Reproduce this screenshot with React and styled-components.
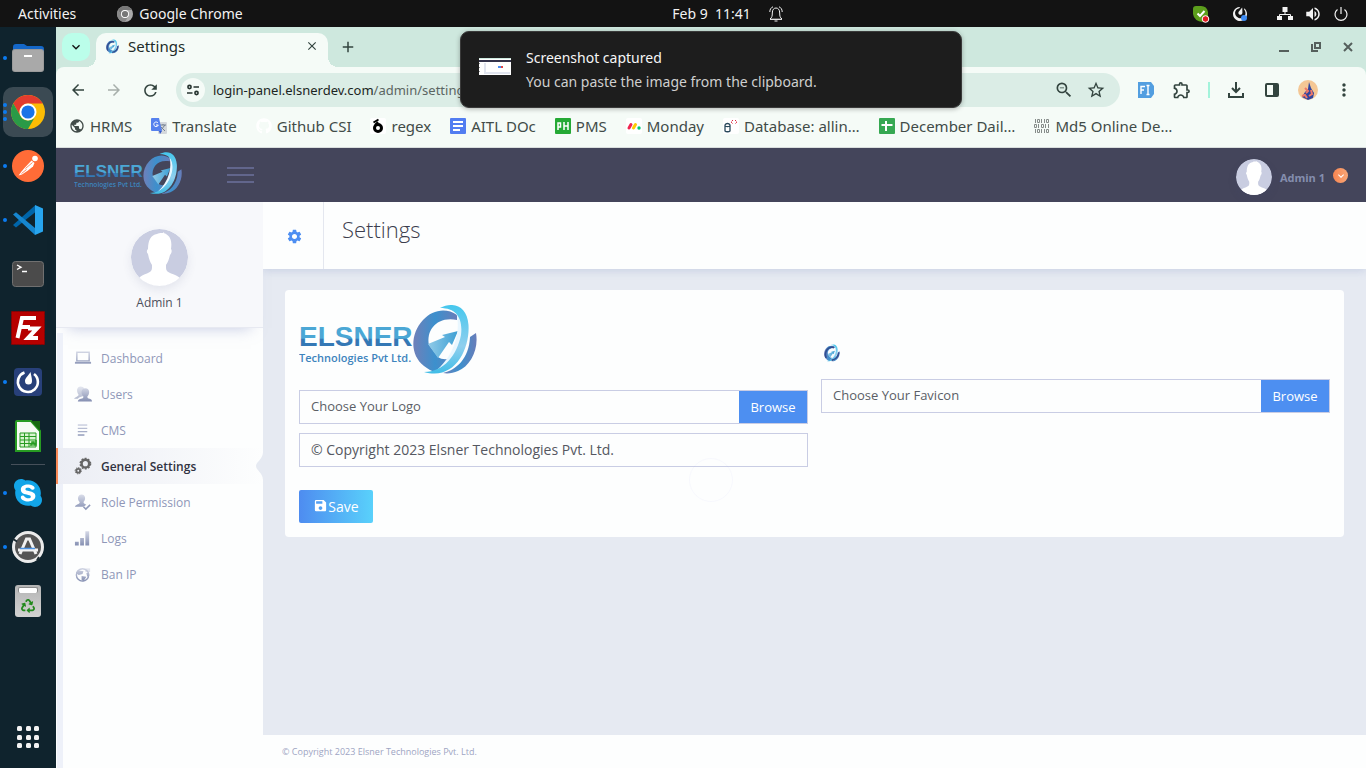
import styled, { createGlobalStyle, css } from "styled-components";
import {
	MdArrowBack,
	MdArrowForward,
	MdRefresh,
	MdStarBorder,
	MdOutlineZoomOut,
	MdOutlineExtension,
	MdMoreVert,
	MdClose,
	MdAdd,
	MdKeyboardArrowDown,
	MdVolumeUp,
	MdSettings,
	MdSave,
	MdPublic,
} from "react-icons/md";
import { FaGithub, FaRecycle, FaSkype } from "react-icons/fa";
import { SiMattermost } from "react-icons/si";

const App = () => {
	return (
		<Desktop>
			<GlobalStyle />
			<TopBar />
			<Workspace>
				<Dock />
				<Browser>
					<TabStrip />
					<Toolbar />
					<Bookmarks />
					<AdminPanel />
					<Notification role="status">
						<Thumbnail />
						<div>
							<NoticeTitle>Screenshot captured</NoticeTitle>
							<NoticeText>
								You can paste the image from the clipboard.
							</NoticeText>
						</div>
					</Notification>
				</Browser>
			</Workspace>
		</Desktop>
	);
};

export default App;

/* ---------- system bar ---------- */

const TopBar = () => (
	<SystemBar>
		<SystemGroup>
			<span>Activities</span>
			<CurrentApp>
				<ChromeIcon size={16} mono />
				Google Chrome
			</CurrentApp>
		</SystemGroup>
		<Clock>
			<span>Feb 9&nbsp; 11:41</span>
			<svg width="14" height="16" viewBox="0 0 14 16" fill="none" stroke="#f2f2f2">
				<path d="M1 13c2-1.500 2.300-3 2.300-6C3.300 3.500 5 2 7 2s3.700 1.500 3.700 5c0 3 .300 4.500 2.300 6" />
				<path d="M1 13.300h12" strokeWidth="1.200" />
				<path d="M5.500 15h3M.800 6C.800 3.500 2 1.500 4 .800M13.200 6C13.200 3.500 12 1.500 10 .800" />
			</svg>
		</Clock>
		<Tray>
			<svg width="18" height="18" viewBox="0 0 18 18">
				<path d="M1 4q0-3 3-3h5q6 0 7 6v5q0 5-5 5-9-1-10-8z" fill="#5c9e1c" />
				<path d="M5.500 8.500l2.500 2.500 4.500-5" fill="none" stroke="#fff" strokeWidth="2" />
				<circle cx="13.500" cy="14" r="3.300" fill="#e01b24" stroke="#fff" />
			</svg>
			<TrayChat>
				<SiMattermost />
				<i />
			</TrayChat>
			<svg width="16" height="16" viewBox="0 0 16 16" fill="#f2f2f2">
				<path d="M5.500 1h5v5h-5zM0 10h5v4H0zM11 10h5v4h-5z" />
				<path d="M8 6v2.500M2.500 10V8.500h11V10" fill="none" stroke="#f2f2f2" />
			</svg>
			<MdVolumeUp size={18} />
			<svg width="16" height="16" viewBox="0 0 16 16" fill="none" stroke="#f2f2f2" strokeWidth="1.200">
				<path d="M4.500 3.500a6 6 0 1 0 7 0M8 1v7" />
			</svg>
		</Tray>
	</SystemBar>
);

/* ---------- dock ---------- */

const ChromeIcon = ({ size = 34, mono }) => (
	<svg width={size} height={size} viewBox="0 0 34 34">
		<circle cx="17" cy="17" r="17" fill={mono ? "#aaa" : "#fbbc04"} />
		<path d="M2.300 8.500A17 17 0 0 1 31.700 8.500H17A8.500 8.500 0 0 0 9.600 21.200z" fill={mono ? "#777" : "#e33b2e"} />
		<path d="M2.300 8.500A17 17 0 0 0 17 34l7.400-12.800A8.500 8.500 0 0 1 9.600 21.200z" fill={mono ? "#888" : "#2a9a47"} />
		<circle cx="17" cy="17" r="8.500" fill="#fff" />
		<circle cx="17" cy="17" r="6.600" fill={mono ? "#777" : "#1a73e8"} />
	</svg>
);

const FilesIcon = () => (
	<svg width="32" height="30" viewBox="0 0 32 30">
		<path d="M1 4q0-3 3-3h8l3 2h14q3 0 3 3v8H1z" fill="#1467c8" />
		<rect width="32" height="23" y="6" rx="3" fill="#9b9b9b" />
		<rect x="1" y="7" width="30" height="21" rx="2" fill="#a9a9a9" />
		<path d="M12 13h8" stroke="#fff" strokeWidth="2" />
	</svg>
);

const PostmanIcon = () => (
	<svg width="34" height="34" viewBox="0 0 34 34">
		<circle cx="17" cy="17" r="16" fill="#ff6c37" />
		<circle cx="24" cy="9.500" r="2.800" fill="#fff" />
		<path d="M20.500 11.500l3 2.500-1.500 3.500-5 4-6 4-3.500 1 3-4 3-3.500z" fill="#fff" />
		<path d="M21.500 13.500l-7 6M10.500 24.500l5-4" stroke="#ff6c37" strokeWidth=".800" />
	</svg>
);

const CodeIcon = () => (
	<svg width="32" height="32" viewBox="0 0 32 32">
		<path d="M1 21L23.500 1v7L4 23.500 1 21z" fill="#0065a9" />
		<path d="M1 10.500l3-2.300L23 24v7z" fill="#1686cf" />
		<path d="M23 1l8 3.500v23L23 31z" fill="#27a5ef" />
	</svg>
);

const TerminalIcon = () => (
	<svg width="32" height="28" viewBox="0 0 32 28">
		<rect x=".500" y="1.500" width="31" height="25" rx="3" fill="#4b4b4b" stroke="#707070" />
		<path d="M5 5l4 2.200L5 9.500M10 11.500h5" fill="none" stroke="#fff" strokeWidth="1.400" />
	</svg>
);

const FilezillaIcon = () => (
	<svg width="34" height="34" viewBox="0 0 34 34">
		<rect x=".500" y=".500" width="33" height="33" fill="#b60000" stroke="#8d0000" strokeDasharray="2 1" />
		<path d="M6.500 27L11 7h14M9 16h10M17 17.500h9L17 27h10" fill="none" stroke="#fff" strokeWidth="4" />
	</svg>
);

const MattermostIcon = () => (
	<svg width="28" height="28" viewBox="0 0 28 28">
		<rect width="28" height="28" rx="4" fill="#28407a" />
		<path d="M10.500 4.500a10 10 0 1 0 9.500 1.500" fill="none" stroke="#fff" strokeWidth="2.600" />
		<path d="M16.500 4c.800 4 1.500 6 1.500 9a3.500 3.500 0 1 1-7 0C11 10.500 14 8 16.500 4z" fill="#fff" />
	</svg>
);

const CalcIcon = () => (
	<svg width="28" height="32" viewBox="0 0 28 32">
		<path d="M3 1h14l9 10v20H2V2q0-1 1-1z" fill="#f6fbf4" stroke="#279b22" strokeWidth="2" />
		<path d="M17 1h9v10z" fill="#16680f" />
		<path d="M6 13h16v14H6zM6 16.500h16M6 20h16M6 23.500h16M10.500 13v14M15 13v14" fill="#d8f4cf" stroke="#279b22" />
		<path d="M16 25h2v-3h2v3h2v-5" stroke="#279b22" fill="none" strokeWidth="1.500" />
	</svg>
);

const SkypeIcon = () => (
	<SkypeMark>
		<FaSkype size={32} />
	</SkypeMark>
);

const UpdaterIcon = () => (
	<svg width="34" height="34" viewBox="0 0 34 34">
		<circle cx="17" cy="17" r="14.500" fill="#555" stroke="#ececec" strokeWidth="3" />
		<path d="M9 24l6.500-15h3L25 24M7 20h20" fill="none" stroke="#f2f2f2" strokeWidth="3" />
		<path d="M9 18.500h15" stroke="#4d94e6" strokeWidth="1.500" />
		<path d="M2 9l4 2.500M26 30.500l2-3.500" stroke="#1c2a31" strokeWidth="2" />
	</svg>
);

const TrashIcon = () => (
	<TrashCan>
		<i />
		<FaRecycle size={14} />
	</TrashCan>
);

const AppsIcon = () => (
	<svg width="24" height="24" viewBox="0 0 24 24" fill="#f3f3f3">
		{[1, 10, 18].map((y) =>
			[1, 10, 18].map((x) => (
				<rect key={`${x}-${y}`} x={x} y={y} width="5" height="5" rx="1.500" />
			))
		)}
	</svg>
);

const dockApps = [
	{ name: "Files", Icon: FilesIcon, dots: 1 },
	{ name: "Chrome", Icon: ChromeIcon, dots: 3, active: true },
	{ name: "Postman", Icon: PostmanIcon, dots: 1 },
	{ name: "Code", Icon: CodeIcon, dots: 1 },
	{ name: "Terminal", Icon: TerminalIcon, dots: 0 },
	{ name: "FileZilla", Icon: FilezillaIcon, dots: 0 },
	{ name: "Mattermost", Icon: MattermostIcon, dots: 1 },
	{ name: "Calc", Icon: CalcIcon, dots: 0 },
];

const dockRunning = [
	{ name: "Skype", Icon: SkypeIcon, dots: 1 },
	{ name: "Updater", Icon: UpdaterIcon, dots: 1 },
	{ name: "Trash", Icon: TrashIcon, dots: 0 },
];

const DockItem = ({ name, Icon, dots, active }) => (
	<DockButton aria-label={name}>
		<DockDots>
			{Array.from({ length: dots }, (_, i) => (
				<i key={i} />
			))}
		</DockDots>
		<DockTile $active={active}>
			<Icon />
		</DockTile>
	</DockButton>
);

const Dock = () => (
	<DockBar>
		{dockApps.map((app) => (
			<DockItem key={app.name} {...app} />
		))}
		<DockLine />
		{dockRunning.map((app) => (
			<DockItem key={app.name} {...app} />
		))}
		<DockSpacer />
		<DockItem name="Show applications" Icon={AppsIcon} dots={0} />
	</DockBar>
);

/* ---------- browser ---------- */

const TabStrip = () => (
	<Tabs>
		<TabSearch aria-label="Search tabs">
			<MdKeyboardArrowDown size={16} />
		</TabSearch>
		<Tab>
			<Favicon size={13} />
			<TabTitle>Settings</TabTitle>
			<PlainButton $size={16} aria-label="Close tab">
				<MdClose size={14} />
			</PlainButton>
		</Tab>
		<PlainButton $size={24} aria-label="New tab">
			<MdAdd size={18} />
		</PlainButton>
		<WindowControls>
			<PlainButton $size={16} aria-label="Minimize">
				<svg width="12" height="12" stroke="#555f5c" strokeWidth="2">
					<path d="M1 10h10" />
				</svg>
			</PlainButton>
			<PlainButton $size={16} aria-label="Restore">
				<svg width="12" height="12" fill="none" stroke="#555f5c" strokeWidth="2">
					<path d="M5 2h5v5H5zM2 3v7h6" />
				</svg>
			</PlainButton>
			<PlainButton $size={16} aria-label="Close window">
				<svg width="12" height="12" stroke="#555f5c" strokeWidth="2">
					<path d="M2 2l8 8M10 2l-8 8" />
				</svg>
			</PlainButton>
		</WindowControls>
	</Tabs>
);

const Toolbar = () => (
	<ToolbarRow>
		<PlainButton $size={28} aria-label="Back">
			<MdArrowBack size={18} />
		</PlainButton>
		<PlainButton $size={28} $dim aria-label="Forward">
			<MdArrowForward size={18} />
		</PlainButton>
		<PlainButton $size={28} aria-label="Reload">
			<MdRefresh size={19} />
		</PlainButton>
		<AddressBar>
			<SiteInfo>
				<svg width="12" height="12" fill="none" stroke="#26332f" strokeWidth="1.600">
					<path d="M6.500 3H12M0 9h5.500" />
					<circle cx="2.500" cy="3" r="1.600" />
					<circle cx="9.500" cy="9" r="1.600" />
				</svg>
			</SiteInfo>
			<Url>
				<b>login-panel.elsnerdev.com</b>/admin/settings
			</Url>
			<PlainButton $size={24} aria-label="Zoom">
				<MdOutlineZoomOut size={20} />
			</PlainButton>
			<PlainButton $size={24} aria-label="Bookmark this tab">
				<MdStarBorder size={20} />
			</PlainButton>
		</AddressBar>
		<PlainButton $size={28} aria-label="Form filler">
			<svg width="16" height="16">
				<path d="M0 0h13l3 4v8l-3 4H0z" fill="#529ee0" />
				<path d="M3 12V4.500h4M3 8h3M8.500 3.500h3M8.500 12.500h3M10 3.500v9" fill="none" stroke="#fff" strokeWidth="1.400" />
			</svg>
		</PlainButton>
		<PlainButton $size={28} aria-label="Extensions">
			<MdOutlineExtension size={20} />
		</PlainButton>
		<ToolbarDivider />
		<PlainButton $size={28} aria-label="Downloads">
			<svg width="16" height="16" fill="none" stroke="#33443f" strokeWidth="2">
				<path d="M8 0v10M4 6l4 4 4-4M1 11v4h14v-4" />
			</svg>
		</PlainButton>
		<PlainButton $size={28} aria-label="Side panel">
			<svg width="14" height="14">
				<rect x="1" y="1" width="12" height="12" rx="1" fill="none" stroke="#33443f" strokeWidth="2" />
				<path d="M8 1h5v12H8z" fill="#33443f" />
			</svg>
		</PlainButton>
		<PlainButton $size={28} aria-label="Profile">
			<svg width="20" height="20">
				<circle cx="10" cy="10" r="10" fill="#f4c795" />
				<path d="M11 2l2 6 3 5-1 5-5 2-6-3 3-5 3-3z" fill="#30459d" />
				<path d="M7 8l3 3-2 2M13 10l1 4-3 2M4 16l3-1 2 3" fill="none" stroke="#ef7968" strokeWidth="2" />
			</svg>
		</PlainButton>
		<PlainButton $size={28} aria-label="Menu">
			<MdMoreVert size={20} />
		</PlainButton>
	</ToolbarRow>
);

const SheetIcon = ({ color, d, width = 2 }) => (
	<svg width="16" height="16">
		<rect width="16" height="16" rx="1" fill={color} />
		<path d={d} fill="none" stroke="#fff" strokeWidth={width} />
	</svg>
);

const TranslateIcon = () => (
	<svg width="16" height="16">
		<rect x="7" y="4" width="9" height="12" rx="1" fill="#d4d8dc" />
		<path d="M9 7h6M12 6v1M10 12l4-5M10 9l4 4" stroke="#738090" />
		<path d="M1 0h7l3 13H1q-1 0-1-1V1q0-1 1-1z" fill="#5681ee" />
		<path d="M8 13h3l-2 3z" fill="#3158c8" />
		<path d="M7 5a2.300 2.300 0 1 0 .300 2H5" fill="none" stroke="#fff" />
	</svg>
);

const RegexIcon = () => (
	<svg width="16" height="16">
		<rect width="16" height="16" rx="2" fill="#fff" />
		<circle cx="8" cy="10" r="3.500" fill="none" stroke="#000" strokeWidth="3" />
		<path d="M3.500 4.500l5-3M5 7l3-3" stroke="#000" strokeWidth="2" />
	</svg>
);

const MondayIcon = () => (
	<svg width="16" height="16" strokeLinecap="round" strokeWidth="3">
		<rect width="16" height="16" rx="2" fill="#fff" />
		<path d="M3 10l2-3.500" stroke="#ef2450" />
		<path d="M7.500 10l2-3.500" stroke="#ffca00" />
		<circle cx="13" cy="10" r="1.700" fill="#00ca72" />
	</svg>
);

const DatabaseIcon = () => (
	<svg width="16" height="16" fill="none">
		<rect width="16" height="16" rx="2" fill="#fff" />
		<path d="M2 7c1-2 4-2 5 0v6c-1 1-4 1-5 0zM2 8c2 1 3 1 5 0" stroke="#28485a" strokeWidth="1.300" />
		<path d="M10 2L8 4l2 2M12 2l2 2-2 2" stroke="#df2941" strokeDasharray="2 1" />
	</svg>
);

const BinaryIcon = () => (
	<svg width="16" height="16" fill="none" stroke="#858b89">
		<path d="M1.500 1v4M7.500 1v4M10.500 1v4M4.500 6v4M11.500 6v4M14.500 6v4M1.500 11v4M7.500 11v4M10.500 11v4" />
		<path d="M3.500 1.500h2v3h-2zM12.500 1.500h2v3h-2zM.500 6.500h2v3h-2zM7.500 6.500h2v3h-2zM3.500 11.500h2v3h-2zM12.500 11.500h2v3h-2z" />
	</svg>
);

const bookmarkList = [
	{ label: "HRMS", icon: <MdPublic size={16} /> },
	{ label: "Translate", icon: <TranslateIcon /> },
	{ label: "Github CSI", icon: <FaGithub size={16} color="#fff" /> },
	{ label: "regex", icon: <RegexIcon /> },
	{ label: "AITL DOc", icon: <SheetIcon color="#527df1" d="M3 4h10M3 8h10M3 12h7" /> },
	{ label: "PMS", icon: <SheetIcon color="#25a935" width={1.5} d="M3 12V5h2.500v4H3M9 4v8M13 4v8M9 8h4" /> },
	{ label: "Monday", icon: <MondayIcon /> },
	{ label: "Database: allin…", icon: <DatabaseIcon /> },
	{ label: "December Dail…", icon: <SheetIcon color="#36a852" d="M2.500 7h11M7 3v10" /> },
	{ label: "Md5 Online De…", icon: <BinaryIcon /> },
];

const Bookmarks = () => (
	<BookmarkBar>
		{bookmarkList.map(({ label, icon }) => (
			<Bookmark key={label} href="#">
				{icon}
				{label}
			</Bookmark>
		))}
	</BookmarkBar>
);

const Thumbnail = () => (
	<svg width="32" height="24" viewBox="0 0 32 24">
		<rect width="32" height="17" fill="#fff" />
		<path d="M0 0h32v1H0z" fill="#cde8de" />
		<path d="M0 2h32v2H0z" fill="#33324a" />
		<path d="M6 5v10h25" fill="none" stroke="#e1e5ef" strokeWidth="2" />
		<path d="M19 9h3" stroke="#4b8df0" strokeWidth="2" />
		<path d="M22 9h2" stroke="#e04545" strokeWidth="2" />
		<path d="M0 5v12" stroke="#222" strokeDasharray="1 3" />
	</svg>
);

/* ---------- admin panel ---------- */

const Emblem = () => (
	<g>
		<path d="M158 10C147 2 133 5 124 15 111 29 111 50 125 61c4 3 7 5 11 6C144 64 150 59 154 52 149 55 143 55 139 52L130 40C127 25 138 11 158 15z" fill="url(#ring)" />
		<path d="M129 39l17-7-3-2 16-4-6 14-3-3-11 16z" fill="url(#arrow)" />
		<path d="M177 28c3 17-6 33-18 38-5 2-10 3-15 2 13-3 26-14 27-36z" fill="url(#ring)" />
		<path d="M157 7C162 24 157 48 138 65 151 60 160 46 163 30 164 18 162 8 157 7z" fill="#e9f7ff" />
		<path d="M141 3C155-4 168 1 169.500 20 171 44 156 76 125 67 145 67 158 50 162 30 164 14 158 3 141 3z" fill="url(#swoosh)" />
	</g>
);

const LogoDefs = () => (
	<defs>
		<linearGradient id="ring">
			<stop offset="0" stopColor="#6f80b9" />
			<stop offset=".5" stopColor="#3c90cd" />
			<stop offset="1" stopColor="#687db9" />
		</linearGradient>
		<linearGradient id="arrow">
			<stop offset="0" stopColor="#91cbe8" />
			<stop offset="1" stopColor="#3c9fd4" />
		</linearGradient>
		<linearGradient id="swoosh" x2="0" y2="1">
			<stop offset="0" stopColor="#45c7ed" />
			<stop offset=".6" stopColor="#8fcfee" />
			<stop offset="1" stopColor="#40bde7" />
		</linearGradient>
		<linearGradient id="word" x2="0" y2="1">
			<stop offset=".55" stopColor="#4ba7d5" />
			<stop offset=".6" stopColor="#3478b5" />
		</linearGradient>
	</defs>
);

const Logo = ({ width, height }) => (
	<svg width={width} height={height} viewBox="0 0 178 70" role="img">
		<LogoDefs />
		<LogoWord x="0" y="41">ELSNER</LogoWord>
		<LogoTagline x="0" y="57">Technologies Pvt Ltd.</LogoTagline>
		<Emblem />
	</svg>
);

const Favicon = ({ size }) => (
	<svg width={size} height={size + 4} viewBox="114 0 65 70">
		<Emblem />
		<path d="M123 55C112 27 134 6 155 13M145 65c15-4 27-17 29-32" fill="none" stroke="#314e91" strokeWidth="7" />
	</svg>
);

const Avatar = ({ size }) => (
	<AvatarSvg width={size} height={size} viewBox="0 0 57 57">
		<circle cx="28.500" cy="28.500" r="28.500" fill="#c9cde1" />
		<path d="M8 49c4-5 13-4 13-10v-3c-2-3-3-6-4-11-2-2-1-4 0-5 0-9 3-14 9-15 3-2 6 0 7-2 0 2 1 1 2 2 5 3 6 8 5 15 1 1 1 4-1 6-1 4-2 7-4 10v3c0 6 9 5 14 10a28.500 28.500 0 0 1-41 0z" fill="#fff" />
	</AvatarSvg>
);

const LaptopIcon = () => (
	<>
		<path d="M3 3h13v9H3z" fill="none" stroke="url(#nav)" strokeWidth="1.500" />
		<path d="M1 13h17v2H1z" />
	</>
);

const UserIcon = () => (
	<>
		<path d="M0 14c1-2 4-2 5-4C2 6 3 1 7 1c2 0 3 1 4 2-3 2-3 6-1 8-2 1-5 1-6 3z" opacity=".7" />
		<path d="M4 17c1-4 6-2 6-5-3-3-3-9 2-9s5 6 2 9c0 3 5 1 5 5z" />
	</>
);

const LinesIcon = () => (
	<path d="M4 3h10v1.500H4zM4 6.500h10V8H4zM4 10h10v1.500H4zM4 13.500h7V15H4z" />
);

const CogsIcon = () => (
	<g fill="none" stroke="#666">
		<circle cx="12" cy="6.500" r="4" strokeWidth="2.600" />
		<circle cx="12" cy="6.500" r="5.500" strokeWidth="1.500" strokeDasharray="2 1.500" />
		<circle cx="4.500" cy="14" r="2" strokeWidth="2" />
		<circle cx="4.500" cy="14" r="3.300" strokeDasharray="1.500 1" />
	</g>
);

const RoleIcon = () => (
	<>
		<path d="M1 14c1-3 5-2 5-5-3-3-2-8 2-8s5 5 2 8c0 2 2 2 3 3l-3 2z" />
		<path d="M10 14l2.500 2.500L17 12" fill="none" stroke="#8f99b9" strokeWidth="1.600" />
	</>
);

const BarsIcon = () => (
	<path d="M1 13h4v4H1zM6.500 9h4v8h-4zM12 2h4v15h-4z" />
);

const GlobeIcon = () => (
	<>
		<circle cx="9" cy="10" r="6.500" fill="none" stroke="url(#nav)" strokeWidth="1.500" />
		<path d="M4 5l6 1-1 3-4 1-3-2zM8 11l5 1-3 5-2-2zM13 8h3v3l-2 1z" />
		<path d="M12 3h5v4h-5z" opacity=".5" />
	</>
);

const navItems = [
	{ label: "Dashboard", Icon: LaptopIcon },
	{ label: "Users", Icon: UserIcon },
	{ label: "CMS", Icon: LinesIcon },
	{ label: "General Settings", Icon: CogsIcon, active: true },
	{ label: "Role Permission", Icon: RoleIcon },
	{ label: "Logs", Icon: BarsIcon },
	{ label: "Ban IP", Icon: GlobeIcon },
];

const FileField = ({ id, label }) => (
	<FileBox htmlFor={id}>
		<FileLabel>{label}</FileLabel>
		<BrowseText>Browse</BrowseText>
		<FileInput id={id} type="file" />
	</FileBox>
);

const AdminPanel = () => (
	<Panel>
		<Header>
			<Logo width={108} height={43} />
			<MenuToggle aria-label="Toggle menu">
				<i />
				<i />
				<i />
			</MenuToggle>
			<Account>
				<Avatar size={36} />
				Admin 1
				<AccountCaret>
					<MdKeyboardArrowDown size={12} />
				</AccountCaret>
			</Account>
		</Header>
		<PanelBody>
			<Sidebar>
				<UserCard>
					<Avatar size={57} />
					<span>Admin 1</span>
				</UserCard>
				<Nav>
					{navItems.map(({ label, Icon, active }) => (
						<NavLink key={label} href="#" $active={active}>
							<svg width="18" height="18" viewBox="0 0 19 18" fill="url(#nav)">
								<defs>
									<linearGradient id="nav" gradientUnits="userSpaceOnUse" x2="0" y2="18">
										<stop offset="0" stopColor="#dfe2ed" />
										<stop offset="1" stopColor="#7f8aae" />
									</linearGradient>
								</defs>
								<Icon />
							</svg>
							{label}
							{active && (
								<Notch width="7" height="28" viewBox="0 0 7 28">
									<path d="M7 0C7 7 0 10 0 14s7 7 7 14z" fill="#e6eaf2" />
								</Notch>
							)}
						</NavLink>
					))}
				</Nav>
			</Sidebar>
			<Main>
				<PageTitle>
					<TitleIcon>
						<MdSettings size={17} />
					</TitleIcon>
					<h1>Settings</h1>
				</PageTitle>
				<Content>
					<Card>
						<Column>
							<Logo width={178} height={70} />
							<FieldStack>
								<FileField id="logo" label="Choose Your Logo" />
								<TextInput
									aria-label="Copyright text"
									defaultValue="© Copyright 2023 Elsner Technologies Pvt. Ltd."
								/>
							</FieldStack>
							<SaveButton>
								<MdSave size={15} />
								Save
							</SaveButton>
						</Column>
						<Column>
							<FaviconPreview>
								<Favicon size={16} />
							</FaviconPreview>
							<FileField id="favicon" label="Choose Your Favicon" />
						</Column>
					</Card>
				</Content>
				<Footer>© Copyright 2023 Elsner Technologies Pvt. Ltd.</Footer>
			</Main>
		</PanelBody>
		<LoaderRing />
	</Panel>
);

/* ---------- styles ---------- */

const GlobalStyle = createGlobalStyle`
	* {
		box-sizing: border-box;
	}

	body {
		margin: 0;
		font-family: "Noto Sans", "Open Sans", sans-serif;
		font-size: 14px;
	}

	button {
		border: 0;
		padding: 0;
		background: none;
		font: inherit;
		color: inherit;
	}

	a {
		text-decoration: none;
		color: inherit;
	}

	svg {
		display: block;
		flex: none;
	}
`;

const Desktop = styled.div`
	display: flex;
	flex-direction: column;
	min-height: 100vh;
`;

const SystemBar = styled.div`
	display: grid;
	grid-template-columns: 1fr auto 1fr;
	align-items: center;
	height: 27px;
	padding: 0 17px 0 18px;
	background: #131313;
	color: #f2f2f2;
`;

const SystemGroup = styled.div`
	display: flex;
	align-items: center;
	gap: 41px;
`;

const CurrentApp = styled.div`
	display: flex;
	align-items: center;
	gap: 6px;
`;

const Clock = styled.div`
	display: flex;
	align-items: center;
	gap: 18px;
	padding-left: 88px;
`;

const Tray = styled.div`
	display: flex;
	align-items: center;
	justify-content: flex-end;
	gap: 11px;

	> :first-child {
		margin-right: 12px;
	}
`;

const TrayChat = styled.span`
	position: relative;
	margin-right: 19px;

	i {
		position: absolute;
		right: 0;
		bottom: 0;
		width: 6px;
		height: 6px;
		border-radius: 50%;
		background: #3f8cf3;
	}
`;

const Workspace = styled.div`
	display: flex;
	flex: 1;
`;

const DockBar = styled.nav`
	display: flex;
	flex-direction: column;
	width: 56px;
	padding: 4px 0;
	background: #0f232d;
`;

const DockButton = styled.button`
	display: flex;
	align-items: center;
	height: 54px;
	padding: 0 3px;
`;

const DockDots = styled.span`
	display: flex;
	flex-direction: column;
	gap: 3px;
	width: 4px;
	margin-right: -4px;
	z-index: 1;

	i {
		width: 4px;
		height: 4px;
		border-radius: 50%;
		background: #0b7bf0;
	}
`;

const DockTile = styled.span`
	display: flex;
	align-items: center;
	justify-content: center;
	width: 50px;
	height: 50px;
	border-radius: 10px;
	background: ${({ $active }) => ($active ? "#3b4a53" : "none")};
`;

const DockLine = styled.div`
	height: 1px;
	margin: 1px 11px;
	background: #46505a;
`;

const DockSpacer = styled.div`
	flex: 1;
`;

const SkypeMark = styled.span`
	display: flex;
	color: #12a5e8;
	background: radial-gradient(#fff 45%, transparent 46%);
`;

const TrashCan = styled.span`
	display: flex;
	flex-direction: column;
	align-items: center;
	gap: 6px;
	width: 26px;
	height: 32px;
	padding: 2px 0;
	border-radius: 3px;
	background: linear-gradient(#b4b4b4, #d2d2d2);
	color: #22891d;

	i {
		width: 20px;
		height: 6px;
		border: 1px solid #8b8b8b;
		border-bottom: 0;
		border-radius: 2px;
		background: #fff;
	}
`;

const Browser = styled.div`
	position: relative;
	display: flex;
	flex: 1;
	flex-direction: column;
	min-width: 0;
	background: #cee8de;
`;

const PlainButton = styled.button`
	display: flex;
	flex: none;
	align-items: center;
	justify-content: center;
	width: ${({ $size }) => $size}px;
	height: ${({ $size }) => $size}px;
	color: ${({ $dim }) => ($dim ? "#a7afab" : "#33443f")};
`;

const Tabs = styled.div`
	display: flex;
	align-items: center;
	height: 40px;
	padding: 0 10px 0 6px;
`;

const TabSearch = styled.button`
	display: flex;
	align-items: center;
	justify-content: center;
	width: 28px;
	height: 28px;
	margin-right: 6px;
	border-radius: 10px;
	background: #bbfeea;
	color: #111;
`;

const Tab = styled.div`
	position: relative;
	display: flex;
	align-items: center;
	align-self: flex-end;
	gap: 9px;
	width: 232px;
	height: 34px;
	margin-right: 8px;
	padding: 0 8px 8px 10px;
	border-radius: 10px 10px 0 0;
	background: #f5fbf7;
	font-size: 15px;
	color: #222b28;

	&::before,
	&::after {
		content: "";
		position: absolute;
		bottom: 0;
		width: 10px;
		height: 10px;
	}

	&::before {
		right: 100%;
		background: radial-gradient(circle at 0 0, transparent 10px, #f5fbf7 10px);
	}

	&::after {
		left: 100%;
		background: radial-gradient(circle at 100% 0, transparent 10px, #f5fbf7 10px);
	}
`;

const TabTitle = styled.span`
	flex: 1;
`;

const WindowControls = styled.div`
	display: flex;
	gap: 16px;
	margin-left: auto;
`;

const ToolbarRow = styled.div`
	display: flex;
	align-items: center;
	gap: 8px;
	height: 46px;
	padding: 0 8px;
	border-radius: 8px 8px 0 0;
	background: #f5fbf7;
`;

const AddressBar = styled.div`
	display: flex;
	flex: 1;
	align-items: center;
	gap: 8px;
	height: 34px;
	margin: 0 4px;
	padding: 0 12px 0 5px;
	border-radius: 17px;
	background: #dbede6;
`;

const SiteInfo = styled.span`
	display: flex;
	align-items: center;
	justify-content: center;
	width: 24px;
	height: 24px;
	border-radius: 50%;
	background: #f5fbf7;
`;

const Url = styled.span`
	flex: 1;
	font-size: 13px;
	color: #5b6562;

	b {
		font-weight: 400;
		color: #1c2523;
	}
`;

const ToolbarDivider = styled.span`
	width: 2px;
	height: 16px;
	margin: 0 4px;
	background: #a3f3db;
`;

const BookmarkBar = styled.div`
	display: flex;
	align-items: center;
	gap: 19px;
	height: 35px;
	padding: 0 13px 8px;
	border-bottom: 1px solid #d9dedd;
	background: #f5fbf7;
`;

const Bookmark = styled.a`
	display: flex;
	align-items: center;
	gap: 5px;
	font-size: 15px;
	white-space: nowrap;
	color: #414b48;
`;

const Notification = styled.div`
	position: absolute;
	top: 4px;
	right: 0;
	left: 0;
	display: flex;
	align-items: center;
	gap: 15px;
	width: 502px;
	height: 77px;
	margin: 0 auto;
	padding: 0 18px;
	border: 1px solid #3a3a3a;
	border-radius: 9px;
	background: #1d1d1d;
	box-shadow: 0 1px 5px rgba(0, 0, 0, 0.3);
	line-height: 24px;
`;

const NoticeTitle = styled.div`
	color: #f6f6f6;
`;

const NoticeText = styled.div`
	color: #cfcfcf;
`;

const Panel = styled.div`
	position: relative;
	display: flex;
	flex: 1;
	flex-direction: column;
	font-family: "Open Sans", sans-serif;
	background: #e6eaf2;
`;

const Header = styled.header`
	display: flex;
	align-items: center;
	height: 54px;
	padding: 0 18px;
	background: #44455b;

	> svg {
		margin-bottom: 4px;
	}
`;

const LogoWord = styled.text`
	font-family: "Liberation Sans", sans-serif;
	font-size: 28px;
	font-weight: 700;
	fill: url(#word);
`;

const LogoTagline = styled.text`
	font-family: "Open Sans", sans-serif;
	font-size: 11px;
	font-weight: 600;
	fill: #3d84bd;
`;

const MenuToggle = styled.button`
	display: flex;
	flex-direction: column;
	gap: 5px;
	width: 27px;
	margin-left: 45px;

	i {
		width: 100%;
		height: 2px;
		background: #62668c;
	}
`;

const Account = styled.button`
	display: flex;
	align-items: center;
	gap: 8px;
	margin-left: auto;
	padding-top: 4px;
	font-size: 11px;
	font-weight: 700;
	color: #858eae;
`;

const AccountCaret = styled.span`
	display: flex;
	align-items: center;
	justify-content: center;
	width: 15px;
	height: 15px;
	margin-bottom: 3px;
	border-radius: 50%;
	background: linear-gradient(90deg, #f78551, #f9a777);
	color: #fff;
`;

const PanelBody = styled.div`
	display: flex;
	flex: 1;
`;

const Sidebar = styled.aside`
	display: flex;
	flex-direction: column;
	width: 207px;
	background: #fdfefe;
`;

const UserCard = styled.div`
	display: flex;
	flex-direction: column;
	align-items: center;
	gap: 8px;
	height: 126px;
	padding-top: 27px;
	border-bottom: 1px solid #e7e9f1;
	background: #f7f8fb;
	box-shadow: 0 12px 14px -12px rgba(140, 150, 200, 0.5);
	font-size: 12px;
	line-height: 18px;
	color: #4d4f5c;
`;

const AvatarSvg = styled.svg`
	border-radius: 50%;
	box-shadow: 0 4px 10px rgba(60, 70, 120, 0.1);
`;

const Nav = styled.nav`
	display: flex;
	flex: 1;
	flex-direction: column;
	margin-top: 5px;
	padding-top: 7px;
	background: linear-gradient(90deg, #fdfefe 1px, #eef1f9 1px, #eef1f9 7px, transparent 7px);
`;

const NavLink = styled.a`
	position: relative;
	display: flex;
	align-items: center;
	gap: 9px;
	height: 36px;
	padding-left: 18px;
	font-size: 12px;
	color: #8f97b8;

	${({ $active }) =>
		$active &&
		css`
			background: linear-gradient(90deg, #ebedf4, #fdfefe);
			box-shadow: inset 2px 0 #f98a57;
			font-weight: 600;
			color: #303241;
		`}
`;

const Notch = styled.svg`
	position: absolute;
	top: 4px;
	right: 0;
`;

const Main = styled.main`
	display: flex;
	flex: 1;
	flex-direction: column;
	min-width: 0;
`;

const PageTitle = styled.div`
	display: flex;
	height: 67px;
	background: #fdfefe;
	box-shadow: 0 2px 8px rgba(120, 140, 190, 0.25);
	clip-path: inset(0 0 -12px 0);

	h1 {
		margin: 0;
		padding: 12px 18px;
		font-size: 22px;
		font-weight: 300;
		line-height: 30px;
		color: #3b3d4d;
	}
`;

const TitleIcon = styled.div`
	display: flex;
	align-items: center;
	justify-content: center;
	width: 61px;
	padding: 2px 0 0 2px;
	border-right: 1px solid #e4e7ef;
	color: #4d8ef2;
`;

const Content = styled.div`
	flex: 1;
	padding: 21px 22px;
`;

const Card = styled.div`
	display: grid;
	grid-template-columns: 1fr 1fr;
	gap: 13px;
	padding: 15px 14px 14px;
	border-radius: 4px;
	background: #fdfefe;
`;

const Column = styled.div`
	display: flex;
	flex-direction: column;
	align-items: flex-start;
`;

const FieldStack = styled.div`
	display: flex;
	flex-direction: column;
	gap: 9px;
	width: 100%;
	padding: 15px 0 23px;
`;

const FileBox = styled.label`
	position: relative;
	display: flex;
	width: 100%;
	height: 34px;
	border: 1px solid #c9cde4;
	font-size: 13px;
`;

const FileLabel = styled.span`
	flex: 1;
	padding-left: 11px;
	line-height: 30px;
	color: #5b5e66;
`;

const BrowseText = styled.span`
	width: 68px;
	background: #4d8ff1;
	line-height: 32px;
	text-align: center;
	color: #fff;
`;

const FileInput = styled.input`
	position: absolute;
	inset: 0;
	width: 100%;
	opacity: 0;
`;

const TextInput = styled.input`
	width: 100%;
	height: 34px;
	padding: 0 11px 2px;
	border: 1px solid #c9cde4;
	background: transparent;
	font-family: inherit;
	font-size: 14px;
	color: #555861;
`;

const SaveButton = styled.button`
	display: flex;
	align-items: center;
	justify-content: center;
	width: 74px;
	height: 33px;
	border-radius: 2px;
	background: linear-gradient(90deg, #4e8cf0, #59d1fb);
	font-size: 14px;
	color: #fff;

	svg {
		margin-bottom: 2px;
	}
`;

const FaviconPreview = styled.div`
	padding: 38px 3px 16px;
`;

const Footer = styled.footer`
	height: 33px;
	padding-left: 19px;
	background: #fdfefe;
	font-size: 9px;
	line-height: 33px;
	color: #9ea5c3;
`;

const LoaderRing = styled.div`
	position: absolute;
	top: 50%;
	left: calc(50% - 22px);
	width: 44px;
	height: 44px;
	border: 1px solid rgba(150, 160, 230, 0.06);
	border-radius: 50%;
	pointer-events: none;
`;
